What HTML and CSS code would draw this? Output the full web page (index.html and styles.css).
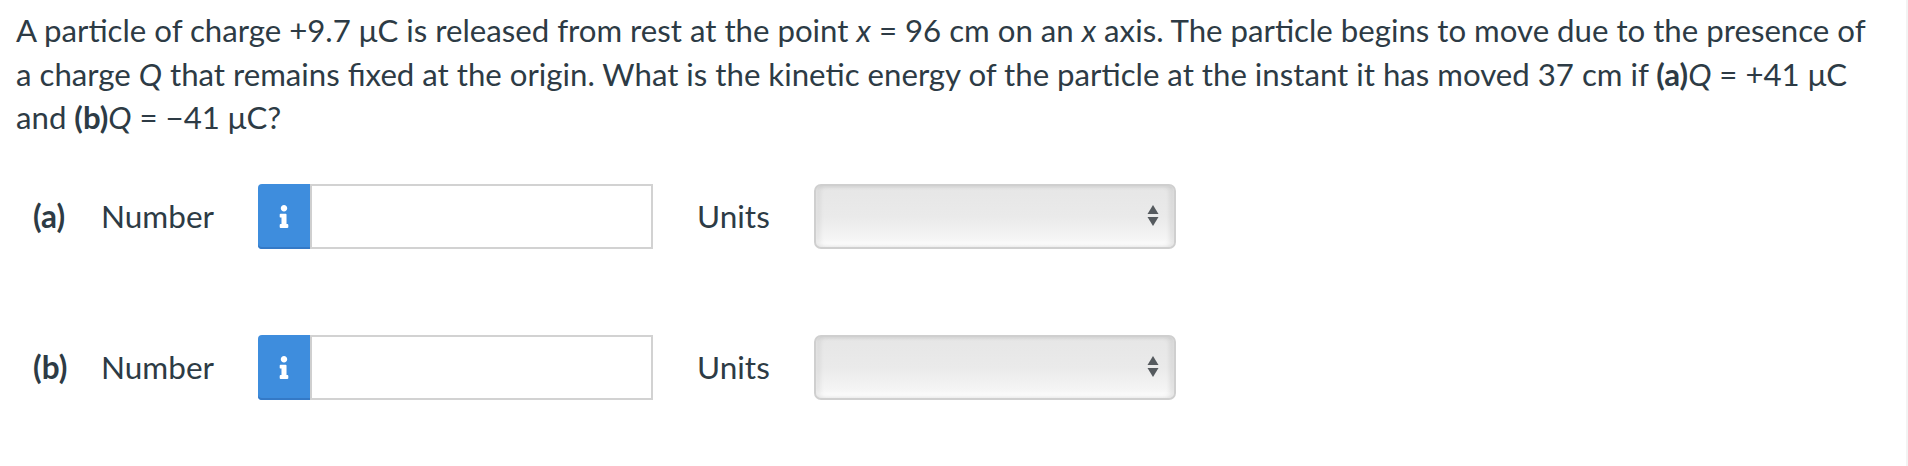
FILE: index.html
```html
<!DOCTYPE html>
<html lang="en">
<head>
<meta charset="utf-8">
<title>Question</title>
<link rel="stylesheet" href="styles.css">
</head>
<body>
<div class="question">
  <p class="question-text">A particle of charge +9.7 μC is released from rest at the point <i>x</i> = 96 cm on an <i>x</i> axis. The particle begins to move due to the presence of a charge <i>Q</i> that remains fixed at the origin. What is the kinetic energy of the particle at the instant it has moved 37 cm if <b>(a)</b><i>Q</i> = +41 μC and <b>(b)</b><i>Q</i> = −41 μC?</p>
  <div class="parts">
    <div class="part">
      <span class="part-label">(a)</span>
      <span class="field-label">Number</span>
      <div class="input-group">
        <span class="info-btn"><svg class="info-icon" viewBox="0 0 192 512" aria-hidden="true"><path d="M20 424.229h20V279.771H20c-11.046 0-20-8.954-20-20V212c0-11.046 8.954-20 20-20h112c11.046 0 20 8.954 20 20v212.229h20c11.046 0 20 8.954 20 20V492c0 11.046-8.954 20-20 20H20c-11.046 0-20-8.954-20-20v-47.771c0-11.046 8.954-20 20-20zM96 0C56.235 0 24 32.235 24 72s32.235 72 72 72 72-32.235 72-72S135.764 0 96 0z"/></svg></span>
        <input class="num-input" type="text">
      </div>
      <span class="units-label">Units</span>
      <div class="units-select">
        <svg class="arrows" viewBox="0 0 12 24" aria-hidden="true"><path d="M6 1 L11.5 10 L0.5 10 Z"/><path d="M0.5 13 L11.5 13 L6 22 Z"/></svg>
      </div>
    </div>
    <div class="part part-b">
      <span class="part-label">(b)</span>
      <span class="field-label">Number</span>
      <div class="input-group">
        <span class="info-btn"><svg class="info-icon" viewBox="0 0 192 512" aria-hidden="true"><path d="M20 424.229h20V279.771H20c-11.046 0-20-8.954-20-20V212c0-11.046 8.954-20 20-20h112c11.046 0 20 8.954 20 20v212.229h20c11.046 0 20 8.954 20 20V492c0 11.046-8.954 20-20 20H20c-11.046 0-20-8.954-20-20v-47.771c0-11.046 8.954-20 20-20zM96 0C56.235 0 24 32.235 24 72s32.235 72 72 72 72-32.235 72-72S135.764 0 96 0z"/></svg></span>
        <input class="num-input" type="text">
      </div>
      <span class="units-label">Units</span>
      <div class="units-select">
        <svg class="arrows" viewBox="0 0 12 24" aria-hidden="true"><path d="M6 1 L11.5 10 L0.5 10 Z"/><path d="M0.5 13 L11.5 13 L6 22 Z"/></svg>
      </div>
    </div>
  </div>
</div>
</body>
</html>
```

FILE: styles.css
```css
html, body {
  margin: 0;
  padding: 0;
  background: #ffffff;
}
body {
  font-family: Lato, "Open Sans", sans-serif;
  color: #2d3b45;
  height: 466px;
  background: linear-gradient(to left, #f3f3f3 2px, #ffffff 2px);
}
.question {
  padding: 9px 36px 0 16px;
}
.question-text {
  margin: 0;
  font-size: 31.2px;
  line-height: 43.6px;
}
.question-text b {
  font-weight: 700;
}
.parts {
  padding-left: 17px;
  margin-top: 44px;
}
.part {
  display: flex;
  align-items: center;
  height: 65px;
  font-size: 31.5px;
}
.part-b {
  margin-top: 86px;
}
.part-label {
  width: 68px;
  flex: none;
  font-weight: 700;
}
.field-label {
  width: 157px;
  flex: none;
}
.input-group {
  display: flex;
  flex: none;
  height: 65px;
  width: 395px;
}
.info-btn {
  flex: none;
  width: 52px;
  background: #3e8ddd;
  border-radius: 4px 0 0 4px;
  box-shadow: inset 0 -2px 0 #3479c6;
  display: flex;
  align-items: center;
  justify-content: center;
}
.info-icon {
  width: 10px;
  height: 23px;
  fill: #ffffff;
}
.num-input {
  flex: 1;
  min-width: 0;
  width: 0;
  margin: 0;
  box-sizing: border-box;
  height: 65px;
  border: 2px solid #d2d2d2;
  border-left: 2px solid #cfcfcf;
  background: #ffffff;
  outline: none;
  font: inherit;
  padding: 0 10px;
}
.units-label {
  margin-left: 44px;
  width: 117px;
  flex: none;
}
.units-select {
  flex: none;
  width: 362px;
  height: 65px;
  box-sizing: border-box;
  border: 2px solid #cfcfcf;
  border-radius: 7px;
  background: linear-gradient(to bottom, #e6e6e6 0%, #eaeaea 50%, #f4f4f4 85%, #fcfcfc 100%);
  box-shadow: inset 4px 0 5px rgba(0,0,0,0.07), inset -4px 0 5px rgba(0,0,0,0.09), inset 0 -3px 4px rgba(255,255,255,0.9);
  display: flex;
  align-items: center;
  justify-content: flex-end;
  padding-right: 15px;
}
.arrows {
  width: 12px;
  height: 24px;
  fill: #555a5e;
}
```
